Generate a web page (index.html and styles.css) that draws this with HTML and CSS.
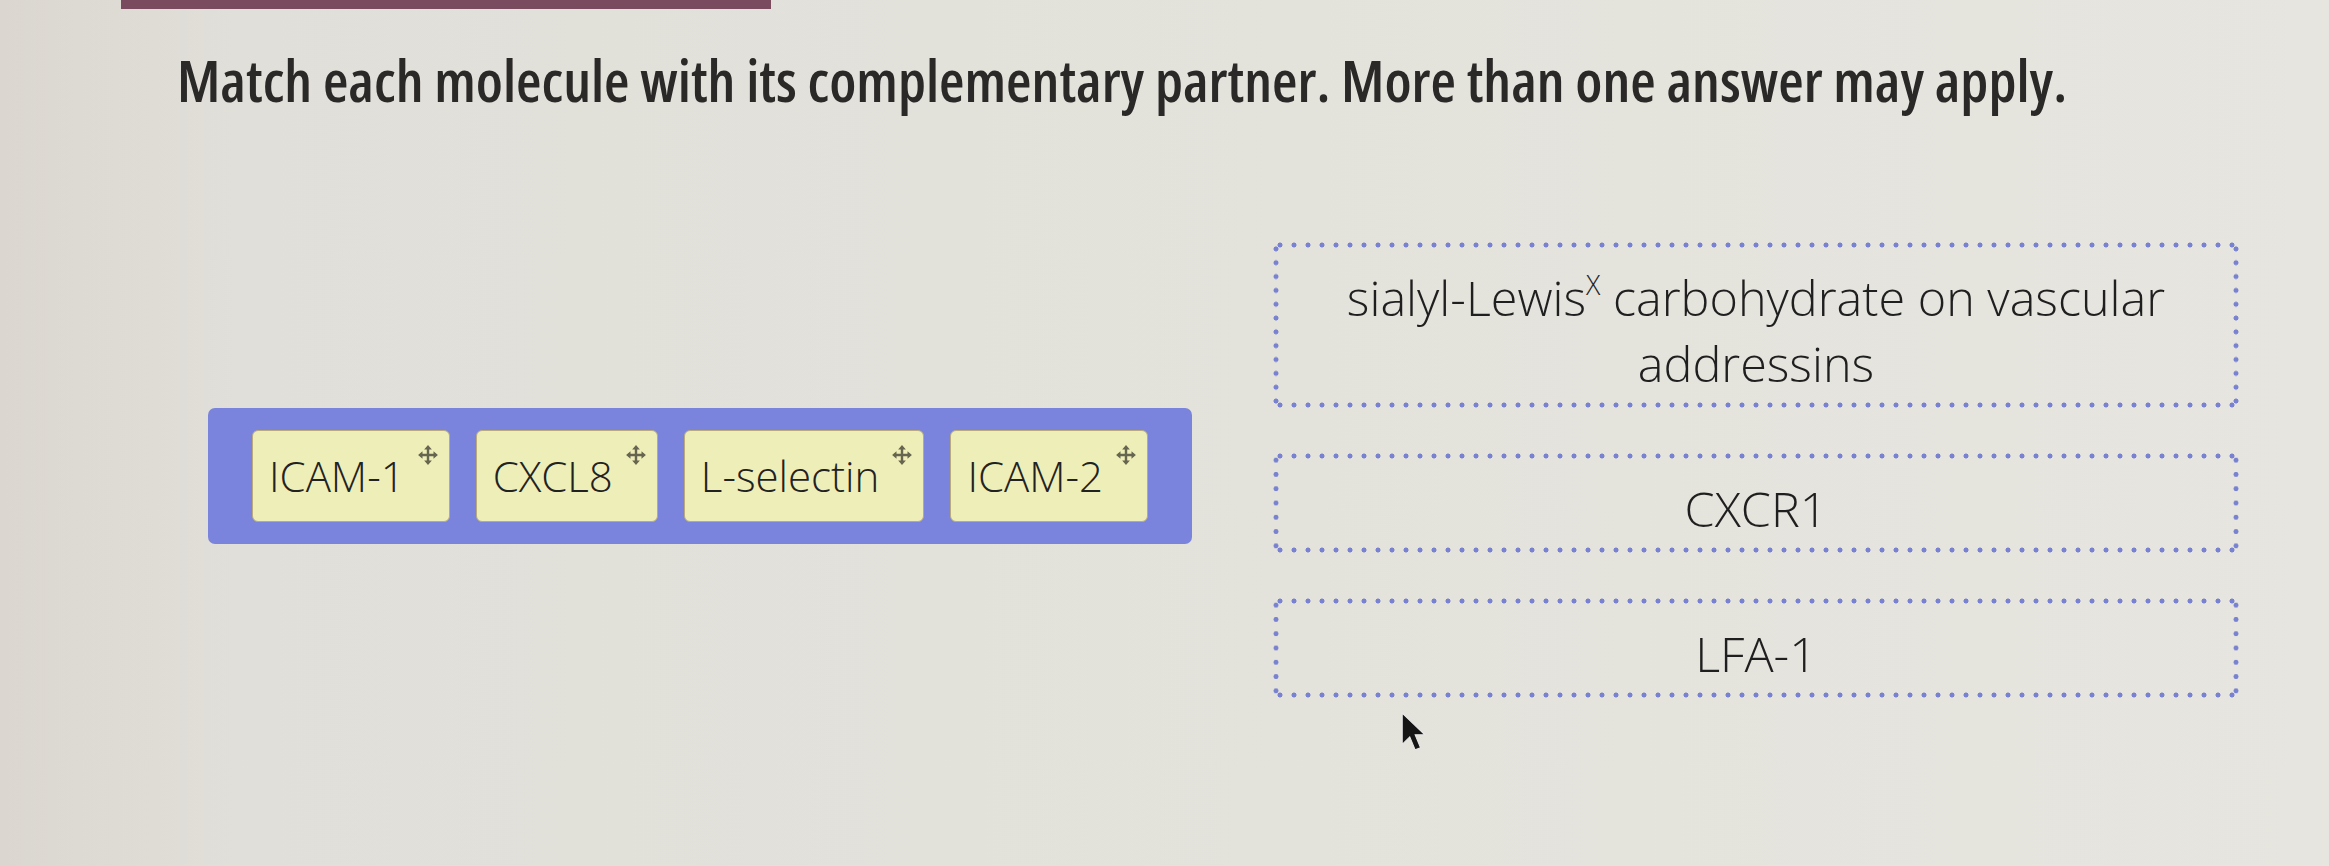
FILE: index.html
```html
<!DOCTYPE html>
<html lang="en">
<head>
    <meta charset="UTF-8">
    <meta name="viewport" content="width=device-width, initial-scale=1.0">
    <title>Matching</title>
    <link rel="stylesheet" href="styles.css">
</head>
<body>

<div class="page">
    <div class="topbar"></div>

    <h1 class="prompt">Match each molecule with its complementary partner. More than one answer may apply.</h1>

    <div class="match">
        <div class="bank">
            <div class="chip"><span class="chip-label">ICAM-1</span><svg class="move" viewBox="0 0 20 20"><path d="M10 3v14M3 10h14"/><path class="head" d="M10 1l-3.5 4h7zM10 19l-3.5-4h7zM1 10l4-3.5v7zM19 10l-4-3.5v7z"/></svg></div>
            <div class="chip"><span class="chip-label">CXCL8</span><svg class="move" viewBox="0 0 20 20"><path d="M10 3v14M3 10h14"/><path class="head" d="M10 1l-3.5 4h7zM10 19l-3.5-4h7zM1 10l4-3.5v7zM19 10l-4-3.5v7z"/></svg></div>
            <div class="chip"><span class="chip-label">L-selectin</span><svg class="move" viewBox="0 0 20 20"><path d="M10 3v14M3 10h14"/><path class="head" d="M10 1l-3.5 4h7zM10 19l-3.5-4h7zM1 10l4-3.5v7zM19 10l-4-3.5v7z"/></svg></div>
            <div class="chip"><span class="chip-label">ICAM-2</span><svg class="move" viewBox="0 0 20 20"><path d="M10 3v14M3 10h14"/><path class="head" d="M10 1l-3.5 4h7zM10 19l-3.5-4h7zM1 10l4-3.5v7zM19 10l-4-3.5v7z"/></svg></div>
        </div>

        <div class="targets">
            <div class="target">sialyl-Lewis<sup class="sup">X</sup> carbohydrate on vascular<br>addressins</div>
            <div class="target">CXCR1</div>
            <div class="target">LFA-1</div>
        </div>
    </div>

    <svg class="cursor" viewBox="0 0 24 38"><path d="M2 2v29l7-7 5 12 5-2-5-12h9z"/></svg>
</div>

</body>
</html>
```

FILE: styles.css
```css
body { margin: 0; background-color: #e2e1da; font-family: "Open Sans", "Noto Sans", sans-serif; color: #272525; }
.page { position: relative; width: 2329px; height: 866px; overflow: hidden; background: linear-gradient(90deg, #dbd6d0 0, #e1dfd9 10%, #e3e2db 55%, #e6e5df 100%); }
.topbar { margin-left: 121px; width: 650px; height: 9px; background-color: #7a4a5f; }

.prompt { margin: 36px 0 0 177px; font-size: 58.5px; font-weight: 600; font-stretch: condensed; line-height: 68px; white-space: nowrap; color: #2b2828; }

.match { display: flex; align-items: flex-start; width: 2031px; margin: 129px 0 0 208px; }

.bank { display: flex; flex-shrink: 0; gap: 26px; margin-top: 166px; padding: 22px 44px; background-color: #7a84dc; border-radius: 7px; }
.chip { display: flex; align-items: flex-start; height: 92px; padding: 0 10px 0 16px; box-sizing: border-box; white-space: nowrap; background-color: #eeeeb8; border: 1px solid #b9ab7c; border-radius: 6px; }
.chip-label { font-size: 42px; font-weight: 300; line-height: 90px; color: #222; }
.move { width: 22px; height: 22px; margin: 13px 0 0 12px; }
.move path { stroke: #66654f; stroke-width: 2.2; fill: none; }
.move path.head { stroke: none; fill: #66654f; }

.targets { display: flex; flex-direction: column; gap: 45px; width: 966px; margin-left: auto; }
.target {
    padding: 22px 20px 12px;
    text-align: center;
    font-size: 48.5px;
    font-weight: 300;
    line-height: 66px;
    color: #1f1f1f;
    background:
        radial-gradient(circle, #7882d0 2.2px, transparent 2.8px) 0 0 / 14px 6px round no-repeat,
        radial-gradient(circle, #7882d0 2.2px, transparent 2.8px) 0 100% / 14px 6px round no-repeat,
        radial-gradient(circle, #7882d0 2.2px, transparent 2.8px) 0 0 / 6px 14px no-repeat round,
        radial-gradient(circle, #7882d0 2.2px, transparent 2.8px) 100% 0 / 6px 14px no-repeat round;
}
.sup { font-size: 0.55em; line-height: 0; vertical-align: 0.8em; }

.cursor { position: absolute; left: 1400px; top: 711px; width: 26px; height: 41px; }
.cursor path { fill: #151515; stroke: #e8e8e8; stroke-width: 1; }
```
